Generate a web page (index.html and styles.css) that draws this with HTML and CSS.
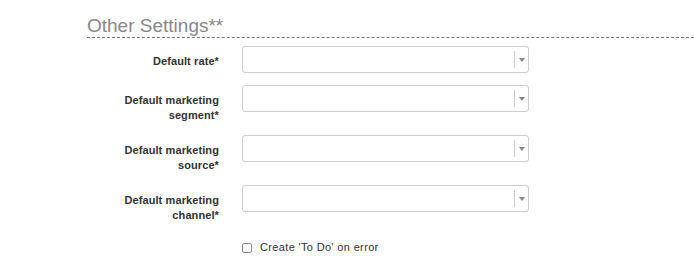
FILE: index.html
```html
<!DOCTYPE html>
<html>
<head>
<meta charset="utf-8">
<link rel="stylesheet" href="styles.css">
</head>
<body>
<div class="page">
  <h2 class="section-title">Other Settings**</h2>
  <div class="form">
    <div class="row">
      <label class="label">Default rate*</label>
      <div class="select"><span class="value"></span><span class="arrow"></span></div>
    </div>
    <div class="row">
      <label class="label">Default marketing segment*</label>
      <div class="select"><span class="value"></span><span class="arrow"></span></div>
    </div>
    <div class="row">
      <label class="label">Default marketing source*</label>
      <div class="select"><span class="value"></span><span class="arrow"></span></div>
    </div>
    <div class="row">
      <label class="label">Default marketing channel*</label>
      <div class="select"><span class="value"></span><span class="arrow"></span></div>
    </div>
    <div class="row check-row">
      <span class="spacer"></span>
      <label class="check"><span class="box"></span>Create 'To Do' on error</label>
    </div>
  </div>
</div>
</body>
</html>
```
FILE: styles.css
```css
html, body {
  margin: 0;
  padding: 0;
  background: #fff;
}
body {
  font-family: "Liberation Sans", Arial, sans-serif;
  color: #333;
  font-size: 11px;
}
.page {
  padding: 15px 0 0 87px;
}
.section-title {
  margin: 0;
  font-weight: normal;
  font-size: 19px;
  line-height: 21px;
  color: #888;
  border-bottom: 1px dashed #777;
  padding-bottom: 1px;
}
.form {
  padding-top: 8px;
}
.row {
  display: flex;
  align-items: flex-start;
  margin-bottom: 12px;
}
.label {
  width: 132px;
  flex: none;
  text-align: right;
  font-weight: bold;
  line-height: 15px;
  padding-top: 8px;
  margin-right: 23px;
  color: #333;
  letter-spacing: 0.1px;
}
.select {
  flex: none;
  width: 285px;
  height: 25px;
  border: 1px solid #ccc;
  border-radius: 3px;
  display: flex;
  align-items: center;
  justify-content: flex-end;
  background: #fff;
}
.arrow {
  width: 13px;
  height: 17px;
  border-left: 1px solid #ccc;
  display: flex;
  align-items: center;
  justify-content: center;
}
.arrow::after {
  content: "";
  border-left: 3px solid transparent;
  border-right: 3px solid transparent;
  border-top: 4px solid #888;
  margin-left: 1px;
}
.check-row {
  padding-top: 5px;
}
.spacer {
  width: 155px;
  flex: none;
}
.check {
  display: flex;
  align-items: center;
  line-height: 15px;
  letter-spacing: 0.35px;
}
.box {
  width: 8px;
  height: 8px;
  border: 1px solid #888;
  border-radius: 2px;
  margin-right: 8px;
}
```
